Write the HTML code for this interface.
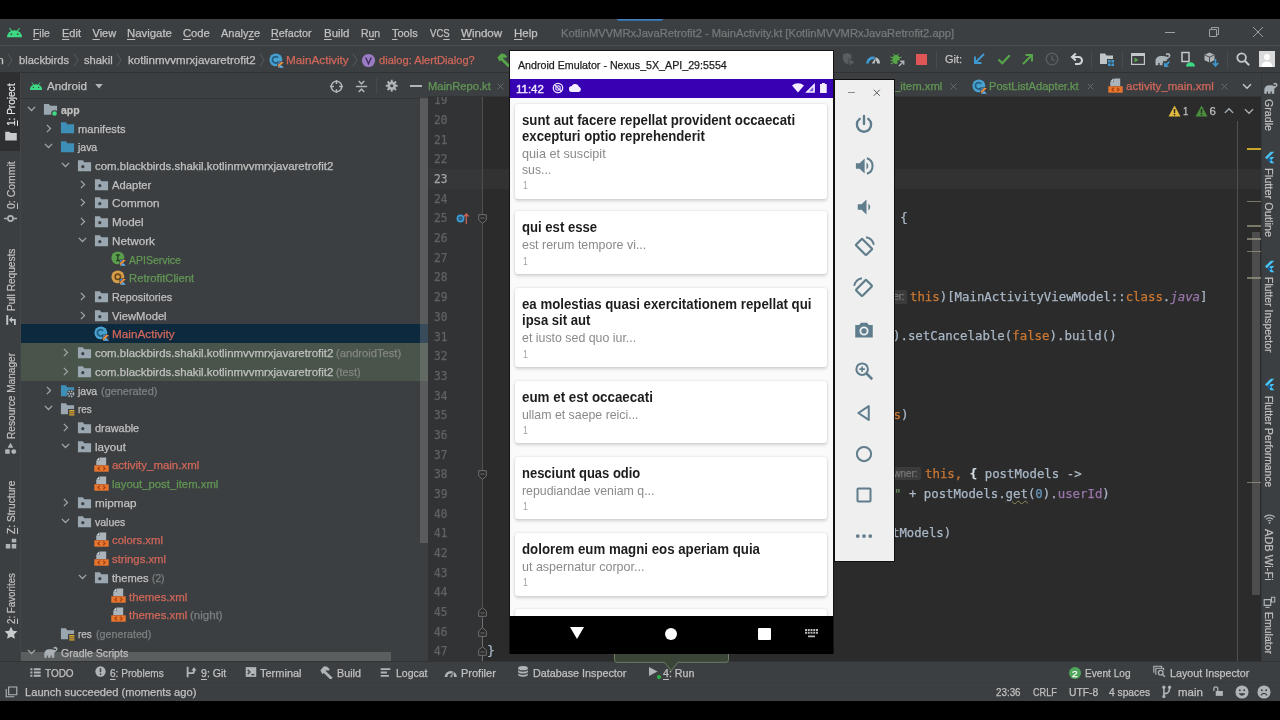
<!DOCTYPE html><html lang="en"><head><meta charset="utf-8"><title>KotlinMVVMRxJavaRetrofit2 - MainActivity.kt</title><style>

html,body{margin:0;padding:0;background:#000;}
body{width:1280px;height:720px;overflow:hidden;position:relative;font-family:'Liberation Sans',sans-serif;will-change:transform;}
.b,.t,.i,.p{position:absolute;}
.t{white-space:pre;transform-origin:0 50%;display:block;-webkit-text-stroke:.25px;}
.p{overflow:hidden;}
u{text-decoration-thickness:1px;text-underline-offset:1.5px;}
.v{position:absolute;white-space:pre;font-size:11px;line-height:14px;color:#c0c0c0;transform-origin:0 0;-webkit-text-stroke:.2px;}
.code{font-family:'DejaVu Sans Mono','Liberation Mono',monospace;}

</style></head><body>
<div class="b" style="left:0px;top:18.5px;width:1280px;height:682.2px;background:#3c3f41;"></div>
<div class="p menubar" style="left:0px;top:18px;width:1280px;height:28px"><div class="b" style="left:0px;top:0.5px;width:1280px;height:27.5px;border-bottom:1px solid #4b4e50;box-sizing:border-box;"></div>
<svg class="i" style="left:5.5px;top:6px;" width="17" height="17" viewBox="0 0 16 16"><path d="M1 12.5a7 6.6 0 0 1 14 0z" fill="#3ddc84"/><path d="M3.6 4.2l1.7 2.6M12.4 4.2l-1.7 2.6" stroke="#3ddc84" stroke-width="1" stroke-linecap="round"/><circle cx="5" cy="9.6" r=".8" fill="#3c3f41"/><circle cx="11" cy="9.6" r=".8" fill="#3c3f41"/></svg>
<span class="t" style="left:33px;top:6.89px;font-size:11px;line-height:16px;color:#c0c0c0;transform:scaleX(0.9444);"><u>F</u>ile</span>
<span class="t" style="left:62px;top:6.89px;font-size:11px;line-height:16px;color:#c0c0c0;transform:scaleX(1);"><u>E</u>dit</span>
<span class="t" style="left:92.5px;top:6.89px;font-size:11px;line-height:16px;color:#c0c0c0;transform:scaleX(1);"><u>V</u>iew</span>
<span class="t" style="left:127px;top:6.89px;font-size:11px;line-height:16px;color:#c0c0c0;transform:scaleX(1.0349);"><u>N</u>avigate</span>
<span class="t" style="left:182.5px;top:6.89px;font-size:11px;line-height:16px;color:#c0c0c0;transform:scaleX(1.0192);"><u>C</u>ode</span>
<span class="t" style="left:221px;top:6.89px;font-size:11px;line-height:16px;color:#c0c0c0;transform:scaleX(1);">Analy<u>z</u>e</span>
<span class="t" style="left:271px;top:6.89px;font-size:11px;line-height:16px;color:#c0c0c0;transform:scaleX(0.9762);"><u>R</u>efactor</span>
<span class="t" style="left:324px;top:6.89px;font-size:11px;line-height:16px;color:#c0c0c0;transform:scaleX(1.0417);"><u>B</u>uild</span>
<span class="t" style="left:361px;top:6.89px;font-size:11px;line-height:16px;color:#c0c0c0;transform:scaleX(0.95);">R<u>u</u>n</span>
<span class="t" style="left:392px;top:6.89px;font-size:11px;line-height:16px;color:#c0c0c0;transform:scaleX(1);"><u>T</u>ools</span>
<span class="t" style="left:430px;top:6.89px;font-size:11px;line-height:16px;color:#c0c0c0;transform:scaleX(0.8696);">VC<u>S</u></span>
<span class="t" style="left:461px;top:6.89px;font-size:11px;line-height:16px;color:#c0c0c0;transform:scaleX(1.0513);"><u>W</u>indow</span>
<span class="t" style="left:514px;top:6.89px;font-size:11px;line-height:16px;color:#c0c0c0;transform:scaleX(1.0435);"><u>H</u>elp</span>
<span class="t" style="left:561px;top:6.89px;font-size:11px;line-height:16px;color:#76797b;transform:scaleX(1.0149);">KotlinMVVMRxJavaRetrofit2 - MainActivity.kt [KotlinMVVMRxJavaRetrofit2.app]</span>
<div class="b" style="left:617px;top:0.5px;width:46px;height:2.6px;background:linear-gradient(#4a8fd0,#2f5f8c);border-radius:0 0 2px 2px;"></div>
<svg class="i" style="left:1162px;top:6.2px;" width="16" height="16" viewBox="0 0 16 16"><path d="M3 8.5h10" stroke="#9da0a2" stroke-width="1"/></svg>
<svg class="i" style="left:1206px;top:6.2px;" width="16" height="16" viewBox="0 0 16 16"><path d="M3.5 5.5h7v7h-7z M5.5 5.5v-2h7v7h-2" fill="none" stroke="#9da0a2" stroke-width="1"/></svg>
<svg class="i" style="left:1250px;top:6.2px;" width="16" height="16" viewBox="0 0 16 16"><path d="M3 3l10 10M13 3L3 13" stroke="#9da0a2" stroke-width="1"/></svg>
</div>
<div class="p navbar" style="left:0px;top:46px;width:1280px;height:27px"><div class="b" style="left:0px;top:0px;width:1280px;height:26.5px;border-bottom:1px solid #2f3133;box-sizing:border-box;"></div>
<span class="t" style="left:-3.5px;top:5.79px;font-size:11px;line-height:16px;color:#c0c0c0;transform:scaleX(1.1167);">n</span>
<svg class="i" style="left:2.5px;top:4px;" width="14" height="20" viewBox="0 0 16 16"><path d="M5.5 1l5 7-5 7" fill="none" stroke="#5c5f61" stroke-width="1"/></svg>
<svg class="i" style="left:69px;top:4px;" width="14" height="20" viewBox="0 0 16 16"><path d="M5.5 1l5 7-5 7" fill="none" stroke="#5c5f61" stroke-width="1"/></svg>
<svg class="i" style="left:111.5px;top:4px;" width="14" height="20" viewBox="0 0 16 16"><path d="M5.5 1l5 7-5 7" fill="none" stroke="#5c5f61" stroke-width="1"/></svg>
<svg class="i" style="left:255px;top:4px;" width="14" height="20" viewBox="0 0 16 16"><path d="M5.5 1l5 7-5 7" fill="none" stroke="#5c5f61" stroke-width="1"/></svg>
<svg class="i" style="left:348px;top:4px;" width="14" height="20" viewBox="0 0 16 16"><path d="M5.5 1l5 7-5 7" fill="none" stroke="#5c5f61" stroke-width="1"/></svg>
<span class="t" style="left:19px;top:5.79px;font-size:11px;line-height:16px;color:#c0c0c0;transform:scaleX(1.01);">blackbirds</span>
<span class="t" style="left:84px;top:5.79px;font-size:11px;line-height:16px;color:#c0c0c0;transform:scaleX(1.0179);">shakil</span>
<span class="t" style="left:127.5px;top:5.79px;font-size:11px;line-height:16px;color:#c0c0c0;transform:scaleX(1.0492);">kotlinmvvmrxjavaretrofit2</span>
<svg class="i" style="left:268.5px;top:6.5px;" width="15" height="15" viewBox="0 0 16 16"><circle cx="7.3" cy="7.3" r="6.9" fill="#47a2cf"/><path d="M9.8 5a3.5 3.5 0 1 0 0 4.6" fill="none" stroke="#245d80" stroke-width="1.8"/><path d="M9 9h7v7H9z" fill="#3c3f41"/><path d="M9.7 9.7h2.8L9.7 12.5z" fill="#3d86d6"/><path d="M12.9 9.7h2.9L9.7 15.8V12.9z" fill="#f5923a"/><path d="M9.9 15.8l3-3 3 3z" fill="#5fb0ea"/></svg>
<span class="t" style="left:286px;top:5.79px;font-size:11px;line-height:16px;color:#d1675a;transform:scaleX(1.0678);">MainActivity</span>
<svg class="i" style="left:360.5px;top:6.5px;" width="15" height="15" viewBox="0 0 16 16"><circle cx="8" cy="8" r="7" fill="#9b7bc4"/><path d="M5 4.8l3 6.6 3-6.6" fill="none" stroke="#3c2a57" stroke-width="1.4"/></svg>
<span class="t" style="left:379px;top:5.79px;font-size:11px;line-height:16px;color:#d1675a;transform:scaleX(1.0105);">dialog: AlertDialog?</span>
<svg class="i" style="left:495.5px;top:5.8px;" width="15" height="15" viewBox="0 0 16 16"><path d="M1.5 5.8l4-4.3 3.6.5 2.8 2.8-1.9 1.9-1.6-1.1-1 1 7.6 7.6-2.1 2.1-7.6-7.6L3.8 10.1z" fill="#57a64a"/></svg>
<svg class="i" style="left:840.5px;top:5.8px;" width="15" height="15" viewBox="0 0 16 16"><path d="M2 2.5l4.5-1.5 4.5 1.5v4c0 3-2 5.5-4.5 6.5C4 12 2 9.5 2 6.5z" fill="#5a5d5f"/><path d="M8.5 7l6.5 4-6.5 4z" fill="#5a5d5f" stroke="#3c3f41" stroke-width=".8"/></svg>
<svg class="i" style="left:864.5px;top:5px;" width="16" height="16" viewBox="0 0 16 16"><path d="M1 12.5a7 7 0 0 1 9-6.7l-1 2.6a4.2 4.2 0 0 0-5.2 4.1z" fill="#3e9ad0"/><path d="M11.3 6.3A7 7 0 0 1 15 12.5h-2.8a4.2 4.2 0 0 0-1.6-3.3z" fill="#c0c5c8"/><path d="M6.8 12.5l4.4-6.8-1.6 6.8z" fill="#c0c5c8"/></svg>
<svg class="i" style="left:889px;top:5.3px;" width="16" height="16" viewBox="0 0 16 16"><ellipse cx="7" cy="8.5" rx="3.6" ry="4.6" fill="#57a64a"/><path d="M4.5 3l1.5 2M9.5 3L8 5M1.5 6l2.5 1M1.5 9.5h2.2M1.8 13l2.4-1.4M12.5 6L10 7" stroke="#57a64a" stroke-width="1.2"/><path d="M8.5 9.5h6.5v6.5H8.5z" fill="#3c3f41"/><path d="M10 15l4.5-4.5M11.2 10.3h3.5v3.5" fill="none" stroke="#aeb4b8" stroke-width="1.4"/></svg>
<div class="b" style="left:916px;top:8.1px;width:10.5px;height:10.5px;background:#e05555;"></div>
<div class="b" style="left:936px;top:4.5px;width:1px;height:18px;background:#494c4e;"></div>
<div class="b" style="left:1091px;top:4.5px;width:1px;height:18px;background:#494c4e;"></div>
<div class="b" style="left:1122px;top:4.5px;width:1px;height:18px;background:#494c4e;"></div>
<div class="b" style="left:1227px;top:4.5px;width:1px;height:18px;background:#494c4e;"></div>
<span class="t" style="left:945px;top:5.39px;font-size:11px;line-height:16px;color:#c0c0c0;transform:scaleX(1);">Git:</span>
<svg class="i" style="left:971px;top:5.3px;" width="16" height="16" viewBox="0 0 16 16"><path d="M13 3L4.5 11.5M4 5.5v6.5h6.5" fill="none" stroke="#3e9ad0" stroke-width="1.9"/></svg>
<svg class="i" style="left:996px;top:5.3px;" width="16" height="16" viewBox="0 0 16 16"><path d="M2.5 8.5l3.8 3.8 7.4-8" fill="none" stroke="#57a64a" stroke-width="2.1"/></svg>
<svg class="i" style="left:1020px;top:5.3px;" width="16" height="16" viewBox="0 0 16 16"><path d="M3 13l8.5-8.5M5.5 4h6.5v6.5" fill="none" stroke="#57a64a" stroke-width="1.9"/></svg>
<svg class="i" style="left:1044px;top:5.3px;" width="16" height="16" viewBox="0 0 16 16"><circle cx="8" cy="8" r="5.8" fill="none" stroke="#5c6062" stroke-width="1.3"/><path d="M8 4.5v3.8l2.6 1.5" fill="none" stroke="#5c6062" stroke-width="1.3"/></svg>
<svg class="i" style="left:1069px;top:5.3px;" width="16" height="16" viewBox="0 0 16 16"><path d="M4 6h5.5a3.5 3.5 0 0 1 0 7H6" fill="none" stroke="#d0d3d5" stroke-width="2.1"/><path d="M6.8 2.5L3 6l3.8 3.5" fill="none" stroke="#d0d3d5" stroke-width="2.1"/></svg>
<svg class="i" style="left:1099px;top:5.3px;" width="16" height="16" viewBox="0 0 16 16"><path d="M1 2.5h5l1.5 2H14v8.5H1z" fill="#c0c5c8"/><path d="M8 8h7.5v7.5H8z" fill="#3c3f41"/><path d="M9 9h2.6v2.6H9zM12.4 9H15v2.6h-2.6zM9 12.4h2.6V15H9zM12.4 12.4H15V15h-2.6z" fill="#3e9ad0"/></svg>
<svg class="i" style="left:1130px;top:5.3px;" width="16" height="16" viewBox="0 0 16 16"><path d="M1 2h14v12H1z" fill="#c4c7c9"/><path d="M2.2 5h11.6v7.8H2.2z" fill="#3c3f41"/><path d="M4.5 6.5l4 2.4-4 2.4z" fill="#57a64a"/></svg>
<svg class="i" style="left:1153.5px;top:4.8px;" width="17" height="17" viewBox="0 0 16 16"><path d="M14.8 2.6c-.9-.9-2.4-1-3.4-.2-.4.3-.4.9-.1 1.3.3.3.8.3 1.2.1.3-.3.8-.2 1.1.1.4.4.4 1 0 1.4-.9.9-2.5-.7-4.6-.7H6.4C3.6 4.6 1.4 6.7 1.4 9.3V13.5H4v-2.3h1.4v2.3H8v-2.3h1.4v2.3H12V9c0-.5.2-1 .6-1.3l1.9-1.5c1.2-.9 1.3-2.6.3-3.6z" fill="#aab3b8"/><path d="M8.5 9.5h7.5v6.5H8.5z" fill="#3c3f41"/><path d="M14.5 10l-4 4M10.2 11v3.3h3.3" fill="none" stroke="#3e9ad0" stroke-width="1.5"/></svg>
<svg class="i" style="left:1179px;top:5.3px;" width="16" height="16" viewBox="0 0 16 16"><path d="M3 1.5h7v9H3z" fill="none" stroke="#c4c7c9" stroke-width="1.5"/><path d="M7 15.5a4.5 4.2 0 0 1 9 0z" fill="#3ddc84"/></svg>
<svg class="i" style="left:1203px;top:5.3px;" width="16" height="16" viewBox="0 0 16 16"><path d="M6.5 1.5l5 2.3v5.4l-5 2.3-5-2.3V3.8z" fill="#aeb4b8"/><path d="M6.5 6.2v5.3M1.5 3.8l5 2.4 5-2.4" fill="none" stroke="#3c3f41" stroke-width=".9"/><path d="M12.5 8v6.5M9.8 12l2.7 2.8 2.7-2.8" fill="none" stroke="#3e9ad0" stroke-width="1.6"/></svg>
<svg class="i" style="left:1234.5px;top:5.3px;" width="16" height="16" viewBox="0 0 16 16"><circle cx="6.6" cy="6.6" r="4.3" fill="none" stroke="#c4c7c9" stroke-width="1.8"/><path d="M9.8 9.8l4.4 4.4" stroke="#c4c7c9" stroke-width="2.1"/></svg>
<svg class="i" style="left:1259px;top:5.3px;" width="16" height="16" viewBox="0 0 16 16"><rect width="16" height="16" fill="#d8dadb"/><circle cx="8" cy="6" r="2.9" fill="#fff"/><path d="M2.5 16c0-4 2.5-5.5 5.5-5.5s5.5 1.5 5.5 5.5z" fill="#fff"/></svg>
</div>
<div class="p stripe-left" style="left:0px;top:72px;width:21px;height:589px"><div class="b" style="left:0px;top:0.5px;width:20.5px;height:588.5px;background:#3c3f41;border-right:1px solid #424547;box-sizing:border-box;"></div>
<div class="b" style="left:0px;top:0.5px;width:20px;height:78.5px;background:#2d2f30;"></div>
<span class="v" style="left:4px;top:53.5px;color:#e4e4e4;transform:rotate(-90deg) scaleX(0.913);"><u>1</u>: Project</span>
<svg class="i" style="left:4.5px;top:57.6px;" width="12" height="12" viewBox="0 0 16 16"><path d="M.3 2.2h5.6l1.7 1.9h8.1v9.8H.3z" fill="#c8cbcc"/></svg>
<span class="v" style="left:4px;top:137px;color:#c0c0c0;transform:rotate(-90deg) scaleX(0.95);"><u>0</u>: Commit</span>
<svg class="i" style="left:4px;top:140.2px;transform:rotate(90deg);" width="13" height="13" viewBox="0 0 16 16"><circle cx="8" cy="8" r="3.2" fill="none" stroke="#aeb4b8" stroke-width="2"/><path d="M8 0v4.5M8 11.5V16" stroke="#aeb4b8" stroke-width="2"/></svg>
<span class="v" style="left:4px;top:238.5px;color:#c0c0c0;transform:rotate(-90deg) scaleX(0.9191);">Pull Requests</span>
<svg class="i" style="left:5px;top:242.3px;" width="12" height="12" viewBox="0 0 16 16"><path d="M3 1.5v13" stroke="#c0c4c6" stroke-width="2.6"/><path d="M13.2 14.5V7.8H7.5" fill="none" stroke="#c0c4c6" stroke-width="2.4"/><path d="M9.5 3.6L5.3 7.8l4.2 4.2z" fill="#c0c4c6"/></svg>
<span class="v" style="left:4px;top:366.5px;color:#c0c0c0;transform:rotate(-90deg) scaleX(0.9202);">Resource Manager</span>
<svg class="i" style="left:4px;top:370.2px;" width="13" height="13" viewBox="0 0 16 16"><path d="M8 1l3.5 6h-7z" fill="#aeb4b8"/><rect x="1.5" y="9" width="5.5" height="5.5" fill="#aeb4b8"/><circle cx="12" cy="11.8" r="3" fill="#aeb4b8"/></svg>
<span class="v" style="left:4px;top:462px;color:#c0c0c0;transform:rotate(-90deg) scaleX(0.9298);"><u>Z</u>: Structure</span>
<svg class="i" style="left:4.5px;top:466.4px;" width="12" height="12" viewBox="0 0 16 16"><rect x="1" y="8" width="6" height="6" fill="#aeb4b8"/><rect x="9" y="8" width="6" height="6" fill="#aeb4b8"/><rect x="9" y="1" width="6" height="5" fill="#aeb4b8"/></svg>
<span class="v" style="left:4px;top:551.5px;color:#c0c0c0;transform:rotate(-90deg) scaleX(0.886);"><u>2</u>: Favorites</span>
<svg class="i" style="left:3.5px;top:554.3px;" width="14" height="14" viewBox="0 0 16 16"><path d="M8 .8l2.2 4.7 5.1.6-3.8 3.5 1 5.1L8 12.2l-4.5 2.5 1-5.1L.7 6.1l5.1-.6z" fill="#c8cbcc"/></svg>
</div>
<div class="p project" style="left:20px;top:72px;width:408px;height:589px"><div class="b" style="left:0.5px;top:0.5px;width:407px;height:588.5px;background:#3c3f41;box-sizing:border-box;"></div>
<div class="b" style="left:0.5px;top:0.5px;width:407px;height:26.5px;border-bottom:1px solid #323436;box-sizing:border-box;"></div>
<svg class="i" style="left:8.5px;top:7px;" width="14" height="14" viewBox="0 0 16 16"><path d="M1 12.5a7 6.6 0 0 1 14 0z" fill="#3ddc84"/><path d="M3.6 4.2l1.7 2.6M12.4 4.2l-1.7 2.6" stroke="#3ddc84" stroke-width="1" stroke-linecap="round"/><circle cx="5" cy="9.6" r=".8" fill="#3c3f41"/><circle cx="11" cy="9.6" r=".8" fill="#3c3f41"/></svg>
<span class="t" style="left:27px;top:6.39px;font-size:11px;line-height:16px;color:#c0c0c0;transform:scaleX(1.0526);">Android</span>
<svg class="i" style="left:75.2px;top:12.4px;" width="8" height="5" viewBox="0 0 9 6"><path d="M0 0h9L4.5 5.5z" fill="#aeb4b8"/></svg>
<svg class="i" style="left:308.5px;top:6.5px;" width="15" height="15" viewBox="0 0 16 16"><circle cx="8" cy="8" r="5.6" fill="none" stroke="#aeb4b8" stroke-width="1.6"/><path d="M8 1v4.2M8 10.8V15M1 8h4.2M10.8 8H15" stroke="#aeb4b8" stroke-width="1.6"/></svg>
<svg class="i" style="left:333.5px;top:6.5px;" width="15" height="15" viewBox="0 0 16 16"><path d="M2 8h12" stroke="#aeb4b8" stroke-width="1.6"/><path d="M5 2.2l3 3 3-3M5 13.8l3-3 3 3" fill="none" stroke="#aeb4b8" stroke-width="1.6"/></svg>
<div class="b" style="left:356px;top:6px;width:1px;height:16px;background:#47494b;"></div>
<svg class="i" style="left:364.75px;top:7.25px;" width="13.5" height="13.5" viewBox="0 0 16 16"><circle cx="8" cy="8" r="3.7" fill="none" stroke="#aeb4b8" stroke-width="2.8"/><path d="M8 1v14M1 8h14M3 3l10 10M13 3L3 13" stroke="#aeb4b8" stroke-width="2.2"/><circle cx="8" cy="8" r="1.9" fill="#3c3f41"/></svg>
<div class="b" style="left:390px;top:13.2px;width:12px;height:1.8px;background:#aeb4b8;"></div>
<div class="b" style="left:0.5px;top:252.44px;width:407px;height:18.72px;background:#0d293e;"></div>
<div class="b" style="left:0.5px;top:271.16px;width:407px;height:37.44px;background:#49544a;"></div>
<svg class="i" style="left:5px;top:29.7px;" width="13" height="13" viewBox="0 0 16 16"><path d="M3.5 6l4.5 4.5L12.5 6" fill="none" stroke="#a3a7a9" stroke-width="1.5"/></svg>
<svg class="i" style="left:23px;top:29.7px;" width="15" height="15" viewBox="0 0 16 16"><path d="M1 2h5.2l1.6 2H15v9.5H1z" fill="#9aa7b0"/><circle cx="12.3" cy="12.3" r="3.6" fill="#3c3f41"/><circle cx="12.3" cy="12.3" r="2.4" fill="#3ddc84"/></svg>
<span class="t" style="left:41px;top:29.79px;font-size:11px;line-height:16px;color:#c0c0c0;font-weight:bold;transform:scaleX(0.95);">app</span>
<svg class="i" style="left:21.87px;top:49.52px;" width="13" height="13" viewBox="0 0 16 16"><path d="M6 3.5l4.5 4.5L6 12.5" fill="none" stroke="#a3a7a9" stroke-width="1.5"/></svg>
<svg class="i" style="left:40px;top:48.42px;" width="15" height="15" viewBox="0 0 16 16"><path d="M1 2.5h5.2l1.6 2H15v9.5H1z" fill="#3e8fb8"/></svg>
<span class="t" style="left:58px;top:48.51px;font-size:11px;line-height:16px;color:#c0c0c0;transform:scaleX(1.0106);">manifests</span>
<svg class="i" style="left:21.87px;top:67.14px;" width="13" height="13" viewBox="0 0 16 16"><path d="M3.5 6l4.5 4.5L12.5 6" fill="none" stroke="#a3a7a9" stroke-width="1.5"/></svg>
<svg class="i" style="left:40px;top:67.14px;" width="15" height="15" viewBox="0 0 16 16"><path d="M1 2.5h5.2l1.6 2H15v9.5H1z" fill="#3e8fb8"/></svg>
<span class="t" style="left:58px;top:67.23px;font-size:11px;line-height:16px;color:#c0c0c0;transform:scaleX(0.95);">java</span>
<svg class="i" style="left:38.74px;top:85.86px;" width="13" height="13" viewBox="0 0 16 16"><path d="M3.5 6l4.5 4.5L12.5 6" fill="none" stroke="#a3a7a9" stroke-width="1.5"/></svg>
<svg class="i" style="left:57px;top:85.86px;" width="15" height="15" viewBox="0 0 16 16"><path d="M1 2.5h5.2l1.6 2H15v9.5H1z" fill="#9aa7b0"/><circle cx="6.2" cy="9.2" r="1.7" fill="#3c3f41"/></svg>
<span class="t" style="left:75px;top:85.95px;font-size:11px;line-height:16px;color:#c0c0c0;transform:scaleX(1.0393);">com.blackbirds.shakil.kotlinmvvmrxjavaretrofit2</span>
<svg class="i" style="left:55.61px;top:105.68px;" width="13" height="13" viewBox="0 0 16 16"><path d="M6 3.5l4.5 4.5L6 12.5" fill="none" stroke="#a3a7a9" stroke-width="1.5"/></svg>
<svg class="i" style="left:73.5px;top:104.58px;" width="15" height="15" viewBox="0 0 16 16"><path d="M1 2.5h5.2l1.6 2H15v9.5H1z" fill="#9aa7b0"/><circle cx="6.2" cy="9.2" r="1.7" fill="#3c3f41"/></svg>
<span class="t" style="left:91.5px;top:104.67px;font-size:11px;line-height:16px;color:#c0c0c0;transform:scaleX(1.0179);">Adapter</span>
<svg class="i" style="left:55.61px;top:124.4px;" width="13" height="13" viewBox="0 0 16 16"><path d="M6 3.5l4.5 4.5L6 12.5" fill="none" stroke="#a3a7a9" stroke-width="1.5"/></svg>
<svg class="i" style="left:73.5px;top:123.3px;" width="15" height="15" viewBox="0 0 16 16"><path d="M1 2.5h5.2l1.6 2H15v9.5H1z" fill="#9aa7b0"/><circle cx="6.2" cy="9.2" r="1.7" fill="#3c3f41"/></svg>
<span class="t" style="left:91.5px;top:123.39px;font-size:11px;line-height:16px;color:#c0c0c0;transform:scaleX(1.0667);">Common</span>
<svg class="i" style="left:55.61px;top:143.12px;" width="13" height="13" viewBox="0 0 16 16"><path d="M6 3.5l4.5 4.5L6 12.5" fill="none" stroke="#a3a7a9" stroke-width="1.5"/></svg>
<svg class="i" style="left:73.5px;top:142.02px;" width="15" height="15" viewBox="0 0 16 16"><path d="M1 2.5h5.2l1.6 2H15v9.5H1z" fill="#9aa7b0"/><circle cx="6.2" cy="9.2" r="1.7" fill="#3c3f41"/></svg>
<span class="t" style="left:91.5px;top:142.11px;font-size:11px;line-height:16px;color:#c0c0c0;transform:scaleX(1.0567);">Model</span>
<svg class="i" style="left:55.61px;top:160.74px;" width="13" height="13" viewBox="0 0 16 16"><path d="M3.5 6l4.5 4.5L12.5 6" fill="none" stroke="#a3a7a9" stroke-width="1.5"/></svg>
<svg class="i" style="left:73.5px;top:160.74px;" width="15" height="15" viewBox="0 0 16 16"><path d="M1 2.5h5.2l1.6 2H15v9.5H1z" fill="#9aa7b0"/><circle cx="6.2" cy="9.2" r="1.7" fill="#3c3f41"/></svg>
<span class="t" style="left:91.5px;top:160.83px;font-size:11px;line-height:16px;color:#c0c0c0;transform:scaleX(1.0625);">Network</span>
<svg class="i" style="left:90.5px;top:179.46px;" width="15" height="15" viewBox="0 0 16 16"><circle cx="7.3" cy="7.3" r="6.9" fill="#5a9e4d"/><path d="M5.3 4.3h4M7.3 4.3v6M5.3 10.3h4" stroke="#26401f" stroke-width="1.5" fill="none"/><path d="M9 9h7v7H9z" fill="#3c3f41"/><path d="M9.7 9.7h2.8L9.7 12.5z" fill="#3d86d6"/><path d="M12.9 9.7h2.9L9.7 15.8V12.9z" fill="#f5923a"/><path d="M9.9 15.8l3-3 3 3z" fill="#5fb0ea"/></svg>
<span class="t" style="left:108.5px;top:179.55px;font-size:11px;line-height:16px;color:#629755;transform:scaleX(0.9537);">APIService</span>
<svg class="i" style="left:90.5px;top:198.18px;" width="15" height="15" viewBox="0 0 16 16"><circle cx="7.3" cy="7.3" r="6.9" fill="#d59d4a"/><circle cx="7.3" cy="7.3" r="2.9" fill="none" stroke="#6b4716" stroke-width="1.7"/><path d="M9 9h7v7H9z" fill="#3c3f41"/><path d="M9.7 9.7h2.8L9.7 12.5z" fill="#3d86d6"/><path d="M12.9 9.7h2.9L9.7 15.8V12.9z" fill="#f5923a"/><path d="M9.9 15.8l3-3 3 3z" fill="#5fb0ea"/></svg>
<span class="t" style="left:108.5px;top:198.27px;font-size:11px;line-height:16px;color:#629755;transform:scaleX(1.0234);">RetrofitClient</span>
<svg class="i" style="left:55.61px;top:218px;" width="13" height="13" viewBox="0 0 16 16"><path d="M6 3.5l4.5 4.5L6 12.5" fill="none" stroke="#a3a7a9" stroke-width="1.5"/></svg>
<svg class="i" style="left:73.5px;top:216.9px;" width="15" height="15" viewBox="0 0 16 16"><path d="M1 2.5h5.2l1.6 2H15v9.5H1z" fill="#9aa7b0"/><circle cx="6.2" cy="9.2" r="1.7" fill="#3c3f41"/></svg>
<span class="t" style="left:91.5px;top:216.99px;font-size:11px;line-height:16px;color:#c0c0c0;transform:scaleX(0.9836);">Repositories</span>
<svg class="i" style="left:55.61px;top:236.72px;" width="13" height="13" viewBox="0 0 16 16"><path d="M6 3.5l4.5 4.5L6 12.5" fill="none" stroke="#a3a7a9" stroke-width="1.5"/></svg>
<svg class="i" style="left:73.5px;top:235.62px;" width="15" height="15" viewBox="0 0 16 16"><path d="M1 2.5h5.2l1.6 2H15v9.5H1z" fill="#9aa7b0"/><circle cx="6.2" cy="9.2" r="1.7" fill="#3c3f41"/></svg>
<span class="t" style="left:91.5px;top:235.71px;font-size:11px;line-height:16px;color:#c0c0c0;transform:scaleX(1.0185);">ViewModel</span>
<svg class="i" style="left:73.5px;top:254.34px;" width="15" height="15" viewBox="0 0 16 16"><circle cx="7.3" cy="7.3" r="6.9" fill="#47a2cf"/><path d="M9.8 5a3.5 3.5 0 1 0 0 4.6" fill="none" stroke="#245d80" stroke-width="1.8"/><path d="M9 9h7v7H9z" fill="#3c3f41"/><path d="M9.7 9.7h2.8L9.7 12.5z" fill="#3d86d6"/><path d="M12.9 9.7h2.9L9.7 15.8V12.9z" fill="#f5923a"/><path d="M9.9 15.8l3-3 3 3z" fill="#5fb0ea"/></svg>
<span class="t" style="left:91.5px;top:254.43px;font-size:11px;line-height:16px;color:#d1675a;transform:scaleX(1.0678);">MainActivity</span>
<svg class="i" style="left:38.74px;top:274.16px;" width="13" height="13" viewBox="0 0 16 16"><path d="M6 3.5l4.5 4.5L6 12.5" fill="none" stroke="#a3a7a9" stroke-width="1.5"/></svg>
<svg class="i" style="left:57px;top:273.06px;" width="15" height="15" viewBox="0 0 16 16"><path d="M1 2.5h5.2l1.6 2H15v9.5H1z" fill="#9aa7b0"/><circle cx="6.2" cy="9.2" r="1.7" fill="#3c3f41"/></svg>
<span class="t" style="left:75px;top:273.15px;font-size:11px;line-height:16px;color:#c0c0c0;transform:scaleX(1.0393);">com.blackbirds.shakil.kotlinmvvmrxjavaretrofit2</span>
<span class="t" style="left:315.5px;top:273.15px;font-size:11px;line-height:16px;color:#838683;transform:scaleX(1.0156);">(androidTest)</span>
<svg class="i" style="left:38.74px;top:292.88px;" width="13" height="13" viewBox="0 0 16 16"><path d="M6 3.5l4.5 4.5L6 12.5" fill="none" stroke="#a3a7a9" stroke-width="1.5"/></svg>
<svg class="i" style="left:57px;top:291.78px;" width="15" height="15" viewBox="0 0 16 16"><path d="M1 2.5h5.2l1.6 2H15v9.5H1z" fill="#9aa7b0"/><circle cx="6.2" cy="9.2" r="1.7" fill="#3c3f41"/></svg>
<span class="t" style="left:75px;top:291.87px;font-size:11px;line-height:16px;color:#c0c0c0;transform:scaleX(1.0393);">com.blackbirds.shakil.kotlinmvvmrxjavaretrofit2</span>
<span class="t" style="left:315.5px;top:291.87px;font-size:11px;line-height:16px;color:#838683;transform:scaleX(0.98);">(test)</span>
<svg class="i" style="left:21.87px;top:311.6px;" width="13" height="13" viewBox="0 0 16 16"><path d="M6 3.5l4.5 4.5L6 12.5" fill="none" stroke="#a3a7a9" stroke-width="1.5"/></svg>
<svg class="i" style="left:40px;top:310.5px;" width="15" height="15" viewBox="0 0 16 16"><path d="M1 2.5h5.2l1.6 2H15v9.5H1z" fill="#3e8fb8"/><circle cx="11.5" cy="11.5" r="4.2" fill="#3c3f41"/><circle cx="11.5" cy="11.5" r="2.9" fill="none" stroke="#aab3b8" stroke-width="1.8" stroke-dasharray="1.6 1.1"/><circle cx="11.5" cy="11.5" r="1" fill="#aab3b8"/></svg>
<span class="t" style="left:58px;top:310.59px;font-size:11px;line-height:16px;color:#c0c0c0;transform:scaleX(0.95);">java</span>
<span class="t" style="left:80.5px;top:310.59px;font-size:11px;line-height:16px;color:#7d8082;transform:scaleX(0.9912);">(generated)</span>
<svg class="i" style="left:21.87px;top:329.22px;" width="13" height="13" viewBox="0 0 16 16"><path d="M3.5 6l4.5 4.5L12.5 6" fill="none" stroke="#a3a7a9" stroke-width="1.5"/></svg>
<svg class="i" style="left:40px;top:329.22px;" width="15" height="15" viewBox="0 0 16 16"><path d="M1 2.5h5.2l1.6 2H15v9.5H1z" fill="#9aa7b0"/><rect x="8.5" y="8.5" width="8" height="8" fill="#3c3f41"/><path d="M9.8 10.4h5.6M9.8 12.6h5.6M9.8 14.8h5.6" stroke="#e0a92f" stroke-width="1.4"/></svg>
<span class="t" style="left:58px;top:329.31px;font-size:11px;line-height:16px;color:#c0c0c0;transform:scaleX(0.9);">res</span>
<svg class="i" style="left:38.74px;top:349.04px;" width="13" height="13" viewBox="0 0 16 16"><path d="M6 3.5l4.5 4.5L6 12.5" fill="none" stroke="#a3a7a9" stroke-width="1.5"/></svg>
<svg class="i" style="left:57px;top:347.94px;" width="15" height="15" viewBox="0 0 16 16"><path d="M1 2.5h5.2l1.6 2H15v9.5H1z" fill="#9aa7b0"/><circle cx="6.2" cy="9.2" r="1.7" fill="#3c3f41"/></svg>
<span class="t" style="left:75px;top:348.03px;font-size:11px;line-height:16px;color:#c0c0c0;transform:scaleX(0.9889);">drawable</span>
<svg class="i" style="left:38.74px;top:366.66px;" width="13" height="13" viewBox="0 0 16 16"><path d="M3.5 6l4.5 4.5L12.5 6" fill="none" stroke="#a3a7a9" stroke-width="1.5"/></svg>
<svg class="i" style="left:57px;top:366.66px;" width="15" height="15" viewBox="0 0 16 16"><path d="M1 2.5h5.2l1.6 2H15v9.5H1z" fill="#9aa7b0"/><circle cx="6.2" cy="9.2" r="1.7" fill="#3c3f41"/></svg>
<span class="t" style="left:75px;top:366.75px;font-size:11px;line-height:16px;color:#c0c0c0;transform:scaleX(1.0517);">layout</span>
<svg class="i" style="left:73.5px;top:385.38px;" width="15" height="15" viewBox="0 0 16 16"><path d="M6 .5h7v7.9H2.4V4.2z" fill="#aab4ba"/><path d="M5.4 .5v3.1H2.4z" fill="#d5dadd"/><path d="M5.4 .5v3.1H2.4v.6h3.7V.5z" fill="#3c3f41" opacity=".55"/><rect x=".3" y="8.8" width="15.4" height="6.9" fill="#e6752f"/><path d="M6.2 10.4l-2 1.85 2 1.85M9.8 10.4l2 1.85-2 1.85" fill="none" stroke="#a8410f" stroke-width="1.3"/></svg>
<span class="t" style="left:91.5px;top:385.47px;font-size:11px;line-height:16px;color:#d1675a;transform:scaleX(1.0417);">activity_main.xml</span>
<svg class="i" style="left:73.5px;top:404.1px;" width="15" height="15" viewBox="0 0 16 16"><path d="M6 .5h7v7.9H2.4V4.2z" fill="#aab4ba"/><path d="M5.4 .5v3.1H2.4z" fill="#d5dadd"/><path d="M5.4 .5v3.1H2.4v.6h3.7V.5z" fill="#3c3f41" opacity=".55"/><rect x=".3" y="8.8" width="15.4" height="6.9" fill="#e6752f"/><path d="M6.2 10.4l-2 1.85 2 1.85M9.8 10.4l2 1.85-2 1.85" fill="none" stroke="#a8410f" stroke-width="1.3"/></svg>
<span class="t" style="left:91.5px;top:404.19px;font-size:11px;line-height:16px;color:#629755;transform:scaleX(1.0291);">layout_post_item.xml</span>
<svg class="i" style="left:38.74px;top:423.92px;" width="13" height="13" viewBox="0 0 16 16"><path d="M6 3.5l4.5 4.5L6 12.5" fill="none" stroke="#a3a7a9" stroke-width="1.5"/></svg>
<svg class="i" style="left:57px;top:422.82px;" width="15" height="15" viewBox="0 0 16 16"><path d="M1 2.5h5.2l1.6 2H15v9.5H1z" fill="#9aa7b0"/><circle cx="6.2" cy="9.2" r="1.7" fill="#3c3f41"/></svg>
<span class="t" style="left:75px;top:422.91px;font-size:11px;line-height:16px;color:#c0c0c0;transform:scaleX(1.0641);">mipmap</span>
<svg class="i" style="left:38.74px;top:441.54px;" width="13" height="13" viewBox="0 0 16 16"><path d="M3.5 6l4.5 4.5L12.5 6" fill="none" stroke="#a3a7a9" stroke-width="1.5"/></svg>
<svg class="i" style="left:57px;top:441.54px;" width="15" height="15" viewBox="0 0 16 16"><path d="M1 2.5h5.2l1.6 2H15v9.5H1z" fill="#9aa7b0"/><circle cx="6.2" cy="9.2" r="1.7" fill="#3c3f41"/></svg>
<span class="t" style="left:75px;top:441.63px;font-size:11px;line-height:16px;color:#c0c0c0;transform:scaleX(0.9531);">values</span>
<svg class="i" style="left:73.5px;top:460.26px;" width="15" height="15" viewBox="0 0 16 16"><path d="M6 .5h7v7.9H2.4V4.2z" fill="#aab4ba"/><path d="M5.4 .5v3.1H2.4z" fill="#d5dadd"/><path d="M5.4 .5v3.1H2.4v.6h3.7V.5z" fill="#3c3f41" opacity=".55"/><rect x=".3" y="8.8" width="15.4" height="6.9" fill="#e6752f"/><path d="M6.2 10.4l-2 1.85 2 1.85M9.8 10.4l2 1.85-2 1.85" fill="none" stroke="#a8410f" stroke-width="1.3"/></svg>
<span class="t" style="left:91.5px;top:460.35px;font-size:11px;line-height:16px;color:#d1675a;transform:scaleX(1.03);">colors.xml</span>
<svg class="i" style="left:73.5px;top:478.98px;" width="15" height="15" viewBox="0 0 16 16"><path d="M6 .5h7v7.9H2.4V4.2z" fill="#aab4ba"/><path d="M5.4 .5v3.1H2.4z" fill="#d5dadd"/><path d="M5.4 .5v3.1H2.4v.6h3.7V.5z" fill="#3c3f41" opacity=".55"/><rect x=".3" y="8.8" width="15.4" height="6.9" fill="#e6752f"/><path d="M6.2 10.4l-2 1.85 2 1.85M9.8 10.4l2 1.85-2 1.85" fill="none" stroke="#a8410f" stroke-width="1.3"/></svg>
<span class="t" style="left:91.5px;top:479.07px;font-size:11px;line-height:16px;color:#d1675a;transform:scaleX(1.0283);">strings.xml</span>
<svg class="i" style="left:55.61px;top:497.7px;" width="13" height="13" viewBox="0 0 16 16"><path d="M3.5 6l4.5 4.5L12.5 6" fill="none" stroke="#a3a7a9" stroke-width="1.5"/></svg>
<svg class="i" style="left:73.5px;top:497.7px;" width="15" height="15" viewBox="0 0 16 16"><path d="M1 2.5h5.2l1.6 2H15v9.5H1z" fill="#9aa7b0"/><circle cx="6.2" cy="9.2" r="1.7" fill="#3c3f41"/></svg>
<span class="t" style="left:91.5px;top:497.79px;font-size:11px;line-height:16px;color:#c0c0c0;transform:scaleX(1.0139);">themes</span>
<span class="t" style="left:131.5px;top:497.79px;font-size:11px;line-height:16px;color:#7d8082;transform:scaleX(0.9231);">(2)</span>
<svg class="i" style="left:90.5px;top:516.42px;" width="15" height="15" viewBox="0 0 16 16"><path d="M6 .5h7v7.9H2.4V4.2z" fill="#aab4ba"/><path d="M5.4 .5v3.1H2.4z" fill="#d5dadd"/><path d="M5.4 .5v3.1H2.4v.6h3.7V.5z" fill="#3c3f41" opacity=".55"/><rect x=".3" y="8.8" width="15.4" height="6.9" fill="#e6752f"/><path d="M6.2 10.4l-2 1.85 2 1.85M9.8 10.4l2 1.85-2 1.85" fill="none" stroke="#a8410f" stroke-width="1.3"/></svg>
<span class="t" style="left:108.5px;top:516.51px;font-size:11px;line-height:16px;color:#d1675a;transform:scaleX(1.0357);">themes.xml</span>
<svg class="i" style="left:90.5px;top:535.14px;" width="15" height="15" viewBox="0 0 16 16"><path d="M6 .5h7v7.9H2.4V4.2z" fill="#aab4ba"/><path d="M5.4 .5v3.1H2.4z" fill="#d5dadd"/><path d="M5.4 .5v3.1H2.4v.6h3.7V.5z" fill="#3c3f41" opacity=".55"/><rect x=".3" y="8.8" width="15.4" height="6.9" fill="#e6752f"/><path d="M6.2 10.4l-2 1.85 2 1.85M9.8 10.4l2 1.85-2 1.85" fill="none" stroke="#a8410f" stroke-width="1.3"/></svg>
<span class="t" style="left:108.5px;top:535.23px;font-size:11px;line-height:16px;color:#d1675a;transform:scaleX(1.0357);">themes.xml</span>
<span class="t" style="left:170px;top:535.23px;font-size:11px;line-height:16px;color:#7d8082;transform:scaleX(1.0484);">(night)</span>
<svg class="i" style="left:40px;top:553.86px;" width="15" height="15" viewBox="0 0 16 16"><path d="M1 2.5h5.2l1.6 2H15v9.5H1z" fill="#9aa7b0"/><rect x="8.5" y="8.5" width="8" height="8" fill="#3c3f41"/><path d="M9.8 10.4h5.6M9.8 12.6h5.6M9.8 14.8h5.6" stroke="#e0a92f" stroke-width="1.4"/></svg>
<span class="t" style="left:58px;top:553.95px;font-size:11px;line-height:16px;color:#c0c0c0;transform:scaleX(0.9);">res</span>
<span class="t" style="left:75.5px;top:553.95px;font-size:11px;line-height:16px;color:#7d8082;transform:scaleX(0.9737);">(generated)</span>
<svg class="i" style="left:5px;top:572.58px;" width="13" height="13" viewBox="0 0 16 16"><path d="M3.5 6l4.5 4.5L12.5 6" fill="none" stroke="#a3a7a9" stroke-width="1.5"/></svg>
<svg class="i" style="left:23px;top:572.58px;" width="15" height="15" viewBox="0 0 16 16"><path d="M14.8 2.6c-.9-.9-2.4-1-3.4-.2-.4.3-.4.9-.1 1.3.3.3.8.3 1.2.1.3-.3.8-.2 1.1.1.4.4.4 1 0 1.4-.9.9-2.5-.7-4.6-.7H6.4C3.6 4.6 1.4 6.7 1.4 9.3V13.5H4v-2.3h1.4v2.3H8v-2.3h1.4v2.3H12V9c0-.5.2-1 .6-1.3l1.9-1.5c1.2-.9 1.3-2.6.3-3.6z" fill="#aab3b8"/></svg>
<span class="t" style="left:41px;top:572.67px;font-size:11px;line-height:16px;color:#c0c0c0;transform:scaleX(0.9643);">Gradle Scripts</span>
<div class="b" style="left:400px;top:26px;width:7.5px;height:445px;background:rgba(166,166,166,.28);"></div>
<div class="b" style="left:1px;top:580px;width:370px;height:8.5px;background:rgba(166,166,166,.30);"></div>
</div>
<div class="p editor" style="left:427px;top:72px;width:834px;height:589px"><div class="b" style="left:0.5px;top:0.5px;width:833px;height:588.5px;background:#2b2b2b;box-sizing:border-box;"></div>
<div class="b" style="left:0.5px;top:25px;width:54.5px;height:564px;background:#313335;border-right:1px solid #4d4f51;"></div>
<div class="b" style="left:0.5px;top:97px;width:54.5px;height:19.7px;background:#353739;"></div>
<div class="b" style="left:56px;top:97px;width:777.5px;height:19.7px;background:#323232;"></div>
<span class="t" style="left:7.2px;top:20.36px;font-size:12px;line-height:16px;color:#606366;font-family:'DejaVu Sans Mono','Liberation Mono',monospace;transform:scaleX(0.9286);">19</span>
<span class="t" style="left:7.2px;top:40.04px;font-size:12px;line-height:16px;color:#606366;font-family:'DejaVu Sans Mono','Liberation Mono',monospace;transform:scaleX(0.9286);">20</span>
<span class="t" style="left:7.2px;top:59.72px;font-size:12px;line-height:16px;color:#606366;font-family:'DejaVu Sans Mono','Liberation Mono',monospace;transform:scaleX(0.9286);">21</span>
<span class="t" style="left:7.2px;top:79.4px;font-size:12px;line-height:16px;color:#606366;font-family:'DejaVu Sans Mono','Liberation Mono',monospace;transform:scaleX(0.9286);">22</span>
<span class="t" style="left:7.2px;top:99.08px;font-size:12px;line-height:16px;color:#a4a3a3;font-family:'DejaVu Sans Mono','Liberation Mono',monospace;transform:scaleX(0.9286);">23</span>
<span class="t" style="left:7.2px;top:118.76px;font-size:12px;line-height:16px;color:#606366;font-family:'DejaVu Sans Mono','Liberation Mono',monospace;transform:scaleX(0.9286);">24</span>
<span class="t" style="left:7.2px;top:138.44px;font-size:12px;line-height:16px;color:#606366;font-family:'DejaVu Sans Mono','Liberation Mono',monospace;transform:scaleX(0.9286);">25</span>
<span class="t" style="left:7.2px;top:158.12px;font-size:12px;line-height:16px;color:#606366;font-family:'DejaVu Sans Mono','Liberation Mono',monospace;transform:scaleX(0.9286);">26</span>
<span class="t" style="left:7.2px;top:177.8px;font-size:12px;line-height:16px;color:#606366;font-family:'DejaVu Sans Mono','Liberation Mono',monospace;transform:scaleX(0.9286);">27</span>
<span class="t" style="left:7.2px;top:197.48px;font-size:12px;line-height:16px;color:#606366;font-family:'DejaVu Sans Mono','Liberation Mono',monospace;transform:scaleX(0.9286);">28</span>
<span class="t" style="left:7.2px;top:217.16px;font-size:12px;line-height:16px;color:#606366;font-family:'DejaVu Sans Mono','Liberation Mono',monospace;transform:scaleX(0.9286);">29</span>
<span class="t" style="left:7.2px;top:236.84px;font-size:12px;line-height:16px;color:#606366;font-family:'DejaVu Sans Mono','Liberation Mono',monospace;transform:scaleX(0.9286);">30</span>
<span class="t" style="left:7.2px;top:256.52px;font-size:12px;line-height:16px;color:#606366;font-family:'DejaVu Sans Mono','Liberation Mono',monospace;transform:scaleX(0.9286);">31</span>
<span class="t" style="left:7.2px;top:276.2px;font-size:12px;line-height:16px;color:#606366;font-family:'DejaVu Sans Mono','Liberation Mono',monospace;transform:scaleX(0.9286);">32</span>
<span class="t" style="left:7.2px;top:295.88px;font-size:12px;line-height:16px;color:#606366;font-family:'DejaVu Sans Mono','Liberation Mono',monospace;transform:scaleX(0.9286);">33</span>
<span class="t" style="left:7.2px;top:315.56px;font-size:12px;line-height:16px;color:#606366;font-family:'DejaVu Sans Mono','Liberation Mono',monospace;transform:scaleX(0.9286);">34</span>
<span class="t" style="left:7.2px;top:335.24px;font-size:12px;line-height:16px;color:#606366;font-family:'DejaVu Sans Mono','Liberation Mono',monospace;transform:scaleX(0.9286);">35</span>
<span class="t" style="left:7.2px;top:354.92px;font-size:12px;line-height:16px;color:#606366;font-family:'DejaVu Sans Mono','Liberation Mono',monospace;transform:scaleX(0.9286);">36</span>
<span class="t" style="left:7.2px;top:374.6px;font-size:12px;line-height:16px;color:#606366;font-family:'DejaVu Sans Mono','Liberation Mono',monospace;transform:scaleX(0.9286);">37</span>
<span class="t" style="left:7.2px;top:394.28px;font-size:12px;line-height:16px;color:#606366;font-family:'DejaVu Sans Mono','Liberation Mono',monospace;transform:scaleX(0.9286);">38</span>
<span class="t" style="left:7.2px;top:413.96px;font-size:12px;line-height:16px;color:#606366;font-family:'DejaVu Sans Mono','Liberation Mono',monospace;transform:scaleX(0.9286);">39</span>
<span class="t" style="left:7.2px;top:433.64px;font-size:12px;line-height:16px;color:#606366;font-family:'DejaVu Sans Mono','Liberation Mono',monospace;transform:scaleX(0.9286);">40</span>
<span class="t" style="left:7.2px;top:453.32px;font-size:12px;line-height:16px;color:#606366;font-family:'DejaVu Sans Mono','Liberation Mono',monospace;transform:scaleX(0.9286);">41</span>
<span class="t" style="left:7.2px;top:473px;font-size:12px;line-height:16px;color:#606366;font-family:'DejaVu Sans Mono','Liberation Mono',monospace;transform:scaleX(0.9286);">42</span>
<span class="t" style="left:7.2px;top:492.68px;font-size:12px;line-height:16px;color:#606366;font-family:'DejaVu Sans Mono','Liberation Mono',monospace;transform:scaleX(0.9286);">43</span>
<span class="t" style="left:7.2px;top:512.36px;font-size:12px;line-height:16px;color:#606366;font-family:'DejaVu Sans Mono','Liberation Mono',monospace;transform:scaleX(0.9286);">44</span>
<span class="t" style="left:7.2px;top:532.04px;font-size:12px;line-height:16px;color:#606366;font-family:'DejaVu Sans Mono','Liberation Mono',monospace;transform:scaleX(0.9286);">45</span>
<span class="t" style="left:7.2px;top:551.72px;font-size:12px;line-height:16px;color:#606366;font-family:'DejaVu Sans Mono','Liberation Mono',monospace;transform:scaleX(0.9286);">46</span>
<span class="t" style="left:7.2px;top:571.4px;font-size:12px;line-height:16px;color:#606366;font-family:'DejaVu Sans Mono','Liberation Mono',monospace;transform:scaleX(0.9286);">47</span>
<div class="b" style="left:0.5px;top:0.5px;width:833px;height:24.5px;background:#3c3f41;border-bottom:1px solid #323436;box-sizing:border-box;"></div>
<span class="t" style="left:1px;top:6.39px;font-size:11px;line-height:16px;color:#629755;transform:scaleX(1.0161);">MainRepo.kt</span>
<svg class="i" style="left:66.5px;top:8px;" width="13" height="13" viewBox="0 0 16 16"><path d="M4.5 4.5l7 7M11.5 4.5l-7 7" stroke="#6c6f71" stroke-width="1.1"/></svg>
<span class="t" style="left:409px;top:6.39px;font-size:11px;line-height:16px;color:#629755;transform:scaleX(1.0291);">layout_post_item.xml</span>
<svg class="i" style="left:519.5px;top:8px;" width="13" height="13" viewBox="0 0 16 16"><path d="M4.5 4.5l7 7M11.5 4.5l-7 7" stroke="#6c6f71" stroke-width="1.1"/></svg>
<svg class="i" style="left:544.5px;top:7px;" width="15" height="15" viewBox="0 0 16 16"><circle cx="7.3" cy="7.3" r="6.9" fill="#47a2cf"/><path d="M9.8 5a3.5 3.5 0 1 0 0 4.6" fill="none" stroke="#245d80" stroke-width="1.8"/><path d="M9 9h7v7H9z" fill="#3c3f41"/><path d="M9.7 9.7h2.8L9.7 12.5z" fill="#3d86d6"/><path d="M12.9 9.7h2.9L9.7 15.8V12.9z" fill="#f5923a"/><path d="M9.9 15.8l3-3 3 3z" fill="#5fb0ea"/></svg>
<span class="t" style="left:562px;top:6.39px;font-size:11px;line-height:16px;color:#629755;transform:scaleX(1.0112);">PostListAdapter.kt</span>
<svg class="i" style="left:656.5px;top:8px;" width="13" height="13" viewBox="0 0 16 16"><path d="M4.5 4.5l7 7M11.5 4.5l-7 7" stroke="#6c6f71" stroke-width="1.1"/></svg>
<svg class="i" style="left:680.5px;top:6px;" width="15" height="15" viewBox="0 0 16 16"><path d="M6 .5h7v7.9H2.4V4.2z" fill="#aab4ba"/><path d="M5.4 .5v3.1H2.4z" fill="#d5dadd"/><path d="M5.4 .5v3.1H2.4v.6h3.7V.5z" fill="#3c3f41" opacity=".55"/><rect x=".3" y="8.8" width="15.4" height="6.9" fill="#e6752f"/><path d="M6.2 10.4l-2 1.85 2 1.85M9.8 10.4l2 1.85-2 1.85" fill="none" stroke="#a8410f" stroke-width="1.3"/></svg>
<span class="t" style="left:699px;top:6.39px;font-size:11px;line-height:16px;color:#d1675a;transform:scaleX(1.0476);">activity_main.xml</span>
<svg class="i" style="left:790.5px;top:8px;" width="13" height="13" viewBox="0 0 16 16"><path d="M4.5 4.5l7 7M11.5 4.5l-7 7" stroke="#6c6f71" stroke-width="1.1"/></svg>
<svg class="i" style="left:813px;top:7px;" width="14" height="14" viewBox="0 0 16 16"><path d="M3.5 6l4.5 4.5L12.5 6" fill="none" stroke="#c4c7c9" stroke-width="1.7"/></svg>
<svg class="i" style="left:28.5px;top:142.2px;" width="9" height="9" viewBox="0 0 16 16"><circle cx="8" cy="8" r="7" fill="#3e9ad0"/><circle cx="8" cy="8" r="2.8" fill="none" stroke="#1d3f57" stroke-width="1.8"/></svg>
<svg class="i" style="left:35.75px;top:140.75px;" width="6.5" height="11.5" viewBox="0 0 7 13"><path d="M3.5 1v12M.8 4l2.7-3 2.7 3" fill="none" stroke="#d9675a" stroke-width="1.3"/></svg>
<div class="b" style="left:54.7px;top:546px;width:1px;height:43px;background:#6e7173;"></div>
<svg class="i" style="left:50.7px;top:141.7px;" width="9" height="10" viewBox="0 0 9 10"><path d="M.7.7h7.6v5.3L4.5 9.3.7 6z" fill="#2b2b2b" stroke="#6e7173" stroke-width="1"/><path d="M2.5 4h4" stroke="#6e7173" stroke-width="1"/></svg>
<svg class="i" style="left:50.7px;top:397.54px;" width="9" height="10" viewBox="0 0 9 10"><path d="M.7.7h7.6v5.3L4.5 9.3.7 6z" fill="#2b2b2b" stroke="#6e7173" stroke-width="1"/><path d="M2.5 4h4" stroke="#6e7173" stroke-width="1"/></svg>
<svg class="i" style="left:50.7px;top:535.1px;" width="9" height="10" viewBox="0 0 9 10"><path d="M.7 9.3h7.6V4L4.5.7.7 4z" fill="#2b2b2b" stroke="#6e7173" stroke-width="1"/><path d="M2.5 6h4" stroke="#6e7173" stroke-width="1"/></svg>
<svg class="i" style="left:50.7px;top:554.78px;" width="9" height="10" viewBox="0 0 9 10"><path d="M.7 9.3h7.6V4L4.5.7.7 4z" fill="#2b2b2b" stroke="#6e7173" stroke-width="1"/><path d="M2.5 6h4" stroke="#6e7173" stroke-width="1"/></svg>
<svg class="i" style="left:50.7px;top:574.46px;" width="9" height="10" viewBox="0 0 9 10"><path d="M.7 9.3h7.6V4L4.5.7.7 4z" fill="#2b2b2b" stroke="#6e7173" stroke-width="1"/><path d="M2.5 6h4" stroke="#6e7173" stroke-width="1"/></svg>
<span class="t" style="left:59.5px;top:570.27px;font-size:12.37px;line-height:18px;color:#a9b7c6;font-family:'DejaVu Sans Mono','Liberation Mono',monospace;transform:scaleX(1.0636);">}</span>
<span class="t" style="left:472.8px;top:137.31px;font-size:12.37px;line-height:18px;color:#a9b7c6;font-family:'DejaVu Sans Mono','Liberation Mono',monospace;transform:scaleX(1.0636);">{</span>
<span class="t" style="left:482.75px;top:216.03px;font-size:12.37px;line-height:18px;color:#a9b7c6;font-family:'DejaVu Sans Mono','Liberation Mono',monospace;transform:scaleX(0.9993);"><span style="color:#cc7832">this</span>)[MainActivityViewModel::<span style="color:#cc7832">class</span>.<span style="color:#9876aa;font-style:italic">java</span>]</span>
<span class="t" style="left:465.65px;top:255.39px;font-size:12.37px;line-height:18px;color:#a9b7c6;font-family:'DejaVu Sans Mono','Liberation Mono',monospace;transform:scaleX(1.0016);">).setCancelable(<span style="color:#cc7832">false</span>).build()</span>
<span class="t" style="left:459.1px;top:334.11px;font-size:12.37px;line-height:18px;color:#a9b7c6;font-family:'DejaVu Sans Mono','Liberation Mono',monospace;transform:scaleX(1.0152);"><span style="color:#cc7832">is</span>)</span>
<span class="t" style="left:497.75px;top:393.15px;font-size:12.37px;line-height:18px;color:#a9b7c6;font-family:'DejaVu Sans Mono','Liberation Mono',monospace;transform:scaleX(1.0022);"><span style="color:#cc7832">this,</span> <b style="color:#d5dde5">{</b> postModels -&gt;</span>
<span class="t" style="left:467.2px;top:412.83px;font-size:12.37px;line-height:18px;color:#a9b7c6;font-family:'DejaVu Sans Mono','Liberation Mono',monospace;transform:scaleX(0.9996);"><span style="color:#6a8759">"</span> + postModels.<span style="text-decoration:underline wavy #8c8c5a 1px;text-underline-offset:2px">get</span>(<span style="color:#6897bb">0</span>).<span style="color:#9876aa">userId</span>)</span>
<span class="t" style="left:465px;top:452.19px;font-size:12.37px;line-height:18px;color:#a9b7c6;font-family:'DejaVu Sans Mono','Liberation Mono',monospace;transform:scaleX(0.9927);">tModels)</span>
<div class="b" style="left:445px;top:218px;width:34.5px;height:13.5px;background:#3b3b3b;border-radius:2px;"></div>
<span class="t" style="left:449px;top:216.84px;font-size:10px;line-height:16px;color:#787878;transform:scaleX(0.95);">owner:</span>
<div class="b" style="left:458px;top:394.5px;width:35.6px;height:13.4px;background:#3b3b3b;border-radius:2px;"></div>
<span class="t" style="left:461px;top:393.54px;font-size:10px;line-height:16px;color:#787878;transform:scaleX(0.9833);">owner:</span>
<svg class="i" style="left:740.5px;top:33px;" width="13" height="12" viewBox="0 0 13 12"><path d="M6.5.6l6 10.8H.5z" fill="#e2b93d"/><path d="M6.5 4v4" stroke="#2b2b2b" stroke-width="1.5"/><circle cx="6.5" cy="9.6" r=".9" fill="#2b2b2b"/></svg>
<span class="t" style="left:756px;top:31.22px;font-size:11.5px;line-height:16px;color:#c0c0c0;transform:scaleX(0.8333);">1</span>
<svg class="i" style="left:767.5px;top:33px;" width="13" height="12" viewBox="0 0 13 12"><path d="M6.5.6l6 10.8H.5z" fill="#4a8f3c"/><path d="M6.5 4v4" stroke="#2b2b2b" stroke-width="1.5"/><circle cx="6.5" cy="9.6" r=".9" fill="#2b2b2b"/></svg>
<span class="t" style="left:782.5px;top:31.22px;font-size:11.5px;line-height:16px;color:#c0c0c0;transform:scaleX(1);">6</span>
<svg class="i" style="left:796px;top:33px;" width="12" height="12" viewBox="0 0 16 16"><path d="M2.5 10.5L8 5l5.5 5.5" fill="none" stroke="#aeb4b8" stroke-width="1.8"/></svg>
<svg class="i" style="left:816px;top:33px;" width="12" height="12" viewBox="0 0 16 16"><path d="M2.5 5.5L8 11l5.5-5.5" fill="none" stroke="#aeb4b8" stroke-width="1.8"/></svg>
<div class="b" style="left:810px;top:49px;width:1px;height:540px;background:#4e5052;"></div>
<div class="b" style="left:820px;top:76px;width:13.5px;height:2px;background:#c9a52c;"></div>
<div class="b" style="left:820px;top:128.5px;width:13.5px;height:1.6px;background:#7a7866;"></div>
<div class="b" style="left:820px;top:153.3px;width:13.5px;height:1.6px;background:#7a7866;"></div>
<div class="b" style="left:820px;top:166.3px;width:13.5px;height:1.6px;background:#7a7866;"></div>
<div class="b" style="left:820px;top:178.8px;width:13.5px;height:1.6px;background:#7a7866;"></div>
<div class="b" style="left:820px;top:205px;width:13.5px;height:1.6px;background:#7a7866;"></div>
<div class="b" style="left:820px;top:409.5px;width:13.5px;height:1.6px;background:#7a7866;"></div>
<div class="b" style="left:825px;top:159.5px;width:8px;height:363.5px;background:rgba(166,166,166,.28);"></div>
</div>
<div class="p stripe-right" style="left:1260px;top:72px;width:20px;height:589px"><div class="b" style="left:0.5px;top:0.5px;width:19.5px;height:588.5px;background:#3c3f41;border-left:1px solid #353739;box-sizing:border-box;"></div>
<svg class="i" style="left:2.5px;top:8.5px;" width="15" height="15" viewBox="0 0 16 16"><path d="M14.8 2.6c-.9-.9-2.4-1-3.4-.2-.4.3-.4.9-.1 1.3.3.3.8.3 1.2.1.3-.3.8-.2 1.1.1.4.4.4 1 0 1.4-.9.9-2.5-.7-4.6-.7H6.4C3.6 4.6 1.4 6.7 1.4 9.3V13.5H4v-2.3h1.4v2.3H8v-2.3h1.4v2.3H12V9c0-.5.2-1 .6-1.3l1.9-1.5c1.2-.9 1.3-2.6.3-3.6z" fill="#aab3b8"/></svg>
<span class="v" style="left:16px;top:27px;color:#c0c0c0;transform:rotate(90deg) scaleX(0.9697);">Gradle</span>
<svg class="i" style="left:3px;top:78.5px;" width="13" height="13" viewBox="0 0 16 16"><path d="M9.5 1L2.5 8l2.2 2.2L13.9 1z" fill="#47c5fb"/><path d="M9.5 7.5L5.8 11.2l3.7 3.8h4.4l-3.7-3.8 3.7-3.7z" fill="#47c5fb"/><path d="M5.8 11.2l2.2 2.2 2.2-2.2L8 9z" fill="#00569e"/></svg>
<span class="v" style="left:16px;top:96px;color:#c0c0c0;transform:rotate(90deg) scaleX(1);">Flutter Outline</span>
<svg class="i" style="left:3px;top:187.5px;" width="13" height="13" viewBox="0 0 16 16"><path d="M9.5 1L2.5 8l2.2 2.2L13.9 1z" fill="#47c5fb"/><path d="M9.5 7.5L5.8 11.2l3.7 3.8h4.4l-3.7-3.8 3.7-3.7z" fill="#47c5fb"/><path d="M5.8 11.2l2.2 2.2 2.2-2.2L8 9z" fill="#00569e"/></svg>
<span class="v" style="left:16px;top:204.5px;color:#c0c0c0;transform:rotate(90deg) scaleX(0.9494);">Flutter Inspector</span>
<svg class="i" style="left:3px;top:306.1px;" width="13" height="13" viewBox="0 0 16 16"><path d="M9.5 1L2.5 8l2.2 2.2L13.9 1z" fill="#47c5fb"/><path d="M9.5 7.5L5.8 11.2l3.7 3.8h4.4l-3.7-3.8 3.7-3.7z" fill="#47c5fb"/><path d="M5.8 11.2l2.2 2.2 2.2-2.2L8 9z" fill="#00569e"/></svg>
<span class="v" style="left:16px;top:324px;color:#c0c0c0;transform:rotate(90deg) scaleX(0.9381);">Flutter Performance</span>
<svg class="i" style="left:3px;top:439.8px;" width="13" height="13" viewBox="0 0 16 16"><path d="M1.5 6.5a9 9 0 0 1 13 0M3.8 9a5.8 5.8 0 0 1 8.4 0M6 11.3a2.8 2.8 0 0 1 4 0" fill="none" stroke="#aeb4b8" stroke-width="1.5"/><circle cx="8" cy="13.5" r="1.1" fill="#aeb4b8"/></svg>
<span class="v" style="left:16px;top:456.7px;color:#c0c0c0;transform:rotate(90deg) scaleX(1.0059);">ADB Wi-Fi</span>
<svg class="i" style="left:3px;top:524.2px;" width="13" height="13" viewBox="0 0 16 16"><path d="M1.5 4.5h8v7h-8z" fill="none" stroke="#aeb4b8" stroke-width="1.4"/><path d="M10.5 1.5h4v6h-4z" fill="none" stroke="#aeb4b8" stroke-width="1.3"/><path d="M3 14h5" stroke="#aeb4b8" stroke-width="1.4"/></svg>
<span class="v" style="left:16px;top:540px;color:#c0c0c0;transform:rotate(90deg) scaleX(0.9545);">Emulator</span>
</div>
<div class="p toolwindow-bar" style="left:0px;top:661px;width:1280px;height:21px"><div class="b" style="left:0px;top:0px;width:1280px;height:21px;background:#3c3f41;border-top:1px solid #323436;box-sizing:border-box;"></div>
<svg class="i" style="left:30px;top:5.8px;" width="11" height="11" viewBox="0 0 16 16"><path d="M.5 3.2h3M5.5 3.2H15.5M.5 8h3M5.5 8H15.5M.5 12.8h3M5.5 12.8H15.5" stroke="#aeb4b8" stroke-width="2.7"/></svg>
<span class="t" style="left:45px;top:4.09px;font-size:11px;line-height:16px;color:#c0c0c0;transform:scaleX(0.9062);">TODO</span>
<svg class="i" style="left:94.5px;top:5.3px;" width="11" height="11" viewBox="0 0 16 16"><circle cx="8" cy="8" r="7.5" fill="#aeb4b8"/><path d="M8 3.5v5.5" stroke="#3c3f41" stroke-width="2.2"/><circle cx="8" cy="11.8" r="1.3" fill="#3c3f41"/></svg>
<span class="t" style="left:110px;top:4.09px;font-size:11px;line-height:16px;color:#c0c0c0;transform:scaleX(0.9153);"><u>6</u>: Problems</span>
<svg class="i" style="left:184.5px;top:4.8px;" width="12" height="12" viewBox="0 0 16 16"><path d="M3.5 1v14M3.5 9.5h5.5c2 0 3-1 3-3V4" fill="none" stroke="#aeb4b8" stroke-width="2.5"/><path d="M8.5 6L12 1.8 15.5 6z" fill="#aeb4b8"/></svg>
<span class="t" style="left:201px;top:4.09px;font-size:11px;line-height:16px;color:#c0c0c0;transform:scaleX(0.9615);"><u>9</u>: Git</span>
<svg class="i" style="left:245px;top:4.8px;" width="12" height="12" viewBox="0 0 16 16"><rect x="1" y="1.5" width="14" height="13" fill="#aeb4b8"/><path d="M3.5 5l3 3-3 3M8.5 11.5h4" fill="none" stroke="#3c3f41" stroke-width="1.7"/></svg>
<span class="t" style="left:260px;top:4.09px;font-size:11px;line-height:16px;color:#c0c0c0;transform:scaleX(1);">Terminal</span>
<svg class="i" style="left:319.25px;top:3.55px;" width="14.5" height="14.5" viewBox="0 0 16 16"><path d="M1.5 5.8l4-4.3 3.6.5 2.8 2.8-1.9 1.9-1.6-1.1-1 1 7.6 7.6-2.1 2.1-7.6-7.6L3.8 10.1z" fill="#aeb4b8"/></svg>
<span class="t" style="left:336.5px;top:4.09px;font-size:11px;line-height:16px;color:#c0c0c0;transform:scaleX(0.9792);">Build</span>
<svg class="i" style="left:379.5px;top:5.8px;" width="11" height="11" viewBox="0 0 16 16"><path d="M1 3h14M1 8h9M1 13h12" stroke="#aeb4b8" stroke-width="2.6"/></svg>
<span class="t" style="left:395.5px;top:4.09px;font-size:11px;line-height:16px;color:#c0c0c0;transform:scaleX(0.9545);">Logcat</span>
<svg class="i" style="left:444.25px;top:4.85px;" width="13.5" height="13.5" viewBox="0 0 16 16"><path d="M.8 13a7.2 7.2 0 0 1 14.4 0h-3.2a4 4 0 0 0-8 0z" fill="#aeb4b8"/><path d="M6.6 13l5.4-7.5-2.3 8z" fill="#aeb4b8" stroke="#3c3f41" stroke-width=".7"/></svg>
<span class="t" style="left:461px;top:4.09px;font-size:11px;line-height:16px;color:#c0c0c0;transform:scaleX(1);">Profiler</span>
<svg class="i" style="left:517px;top:4.3px;" width="12" height="13" viewBox="0 0 16 16"><ellipse cx="8" cy="3.5" rx="6.5" ry="2.7" fill="#aeb4b8"/><path d="M1.5 5.8c0 3.5 13 3.5 13 0v2.4c0 3.5-13 3.5-13 0zM1.5 10c0 3.5 13 3.5 13 0v2.4c0 3.5-13 3.5-13 0z" fill="#aeb4b8"/></svg>
<span class="t" style="left:533px;top:4.09px;font-size:11px;line-height:16px;color:#c0c0c0;transform:scaleX(0.9789);">Database Inspector</span>
<svg class="i" style="left:648px;top:5.3px;" width="10" height="11" viewBox="0 0 10 11"><path d="M1 1l8.5 4.5L1 10z" fill="#aeb4b8"/></svg>
<div class="b" style="left:655.8px;top:12.8px;width:4.6px;height:4.6px;background:#2fb344;border-radius:50%;border:1px solid #3c3f41;"></div>
<span class="t" style="left:663px;top:4.09px;font-size:11px;line-height:16px;color:#c0c0c0;transform:scaleX(0.9688);"><u>4</u>: Run</span>
<div class="b" style="left:1068.8px;top:5.8px;width:12.4px;height:12.4px;background:#4fa55a;border-radius:50%;"></div>
<span class="t" style="left:1072.3px;top:4.51px;font-size:9.5px;line-height:16px;color:#fff;transform:scaleX(1.08);">2</span>
<span class="t" style="left:1085px;top:4.09px;font-size:11px;line-height:16px;color:#c0c0c0;transform:scaleX(0.92);">Event Log</span>
<svg class="i" style="left:1152.5px;top:3.8px;" width="13" height="13" viewBox="0 0 16 16"><path d="M1 9.5V1.5h9.5v2M3.5 12V4h9.5v2.5" fill="none" stroke="#aeb4b8" stroke-width="1.4"/><circle cx="9.5" cy="9.5" r="2.8" fill="none" stroke="#aeb4b8" stroke-width="1.5"/><path d="M11.5 11.5l3 3" stroke="#aeb4b8" stroke-width="1.7"/></svg>
<span class="t" style="left:1170px;top:4.09px;font-size:11px;line-height:16px;color:#c0c0c0;transform:scaleX(0.9753);">Layout Inspector</span>
</div>
<svg class="i" style="left:612px;top:640px" width="120" height="32" viewBox="0 0 120 32"><path d="M2.5 0v19.8a2.5 2.5 0 0 0 2.5 2.5H52.5l6.7 8.4 6.7-8.4H114a2.5 2.5 0 0 0 2.5-2.5V0z" fill="#394637" stroke="#6c7f64" stroke-width="1"/></svg>
<div class="p statusbar" style="left:0px;top:682px;width:1280px;height:19px"><div class="b" style="left:0px;top:0px;width:1280px;height:18.7px;background:#3c3f41;border-top:1px solid #393c3e;box-sizing:border-box;"></div>
<svg class="i" style="left:4.5px;top:3px;" width="13" height="13" viewBox="0 0 16 16"><path d="M4.5 2.5h10v9.5h-10z" fill="none" stroke="#aeb4b8" stroke-width="1.4"/><path d="M1.5 5v9.5h10" fill="none" stroke="#aeb4b8" stroke-width="1.4"/></svg>
<span class="t" style="left:25px;top:1.59px;font-size:11px;line-height:16px;color:#c0c0c0;transform:scaleX(1.0118);">Launch succeeded (moments ago)</span>
<span class="t" style="left:996px;top:1.59px;font-size:11px;line-height:16px;color:#c0c0c0;transform:scaleX(0.8929);">23:36</span>
<span class="t" style="left:1033px;top:1.59px;font-size:11px;line-height:16px;color:#c0c0c0;transform:scaleX(0.8276);">CRLF</span>
<span class="t" style="left:1069px;top:1.59px;font-size:11px;line-height:16px;color:#c0c0c0;transform:scaleX(0.9355);">UTF-8</span>
<span class="t" style="left:1109px;top:1.59px;font-size:11px;line-height:16px;color:#c0c0c0;transform:scaleX(0.9318);">4 spaces</span>
<svg class="i" style="left:1160.5px;top:2.5px;" width="11" height="14" viewBox="0 0 12 16"><path d="M3 2v12M3 10c5 0 6.5-2 6.5-7" fill="none" stroke="#aeb4b8" stroke-width="1.8"/><circle cx="3" cy="2.5" r="1.8" fill="#aeb4b8"/><circle cx="9.5" cy="2.5" r="1.8" fill="#aeb4b8"/><circle cx="3" cy="13" r="1.8" fill="#aeb4b8"/></svg>
<span class="t" style="left:1178px;top:1.59px;font-size:11px;line-height:16px;color:#c0c0c0;transform:scaleX(1.0417);">main</span>
<svg class="i" style="left:1211.5px;top:3.2px;" width="12" height="12" viewBox="0 0 16 16"><rect x="5" y="8" width="9.5" height="6.5" fill="#aeb4b8"/><path d="M2.5 8V5a2.6 2.6 0 0 1 5.2 0v3" fill="none" stroke="#aeb4b8" stroke-width="1.7"/></svg>
<svg class="i" style="left:1234.5px;top:2.5px;" width="14" height="14" viewBox="0 0 16 16"><circle cx="8" cy="8" r="7.5" fill="#aeb4b8"/><circle cx="5.5" cy="6" r="1.1" fill="#3c3f41"/><circle cx="10.5" cy="6" r="1.1" fill="#3c3f41"/><path d="M4.3 9.5a3.9 3.9 0 0 0 7.4 0z" fill="#3c3f41"/></svg>
<svg class="i" style="left:1257px;top:2.5px;" width="14" height="14" viewBox="0 0 16 16"><circle cx="8" cy="8" r="7.5" fill="#aeb4b8"/><circle cx="5.5" cy="6" r="1.1" fill="#3c3f41"/><circle cx="10.5" cy="6" r="1.1" fill="#3c3f41"/><path d="M4.5 12a3.7 3.7 0 0 1 7 0" fill="none" stroke="#3c3f41" stroke-width="1.3"/></svg>
</div>
<div class="p emulator" style="left:509px;top:50px;width:325px;height:604px"><div class="b" style="left:0px;top:0px;width:325px;height:603.7px;background:#fafafa;border:1px solid #141414;border-bottom:none;box-sizing:border-box;"></div>
<div class="b" style="left:1px;top:1px;width:323px;height:28px;background:#fff;"></div>
<span class="t" style="left:8.5px;top:6.59px;font-size:11px;line-height:16px;color:#1c1c1c;transform:scaleX(0.9698);">Android Emulator - Nexus_5X_API_29:5554</span>
<div class="b" style="left:1px;top:29px;width:323px;height:18.5px;background:#3700b3;"></div>
<span class="t" style="left:6.8px;top:30.92px;font-size:11.5px;line-height:16px;color:#efe6ff;transform:scaleX(0.9964);-webkit-text-stroke:.45px;">11:42</span>
<svg class="i" style="left:42.5px;top:32px;" width="12" height="12" viewBox="0 0 16 16"><circle cx="8" cy="8" r="6.3" fill="none" stroke="#efe6ff" stroke-width="1.7"/><circle cx="8" cy="8" r="3" fill="none" stroke="#efe6ff" stroke-width="1.4"/><path d="M3.5 3.5l9 9" stroke="#efe6ff" stroke-width="1.6"/></svg>
<svg class="i" style="left:59.7px;top:34px;" width="12" height="8" viewBox="0 0 12 8"><path d="M3 8a3 3 0 0 1-.3-6A4 4 0 0 1 10 2.8 2.7 2.7 0 0 1 9.8 8z" fill="#f4eeff"/></svg>
<svg class="i" style="left:283.1px;top:32.85px;" width="12" height="9.7" viewBox="0 0 13 10"><path d="M6.5 10L0 2.5a9.5 9.5 0 0 1 13 0z" fill="#f4eeff"/></svg>
<svg class="i" style="left:296px;top:33px;" width="10" height="9.8" viewBox="0 0 10 10"><path d="M10 0v10H0z" fill="#f4eeff"/><path d="M8.3 4v4.3H4z" fill="#7a55d6"/></svg>
<svg class="i" style="left:311.2px;top:32.55px;" width="6.8" height="10.5" viewBox="0 0 7 11"><path d="M2 0h3v1h2v10H0V1h2z" fill="#f4eeff"/></svg>
<div class="b" style="left:6px;top:54.2px;width:312px;height:94.5px;background:#fff;border-radius:3px;box-shadow:0 1.5px 3.5px rgba(0,0,0,.16),0 0 2.5px rgba(0,0,0,.08);"></div>
<span class="t" style="left:13.3px;top:62.15px;font-size:14px;line-height:16px;color:#1d1d1d;font-weight:bold;transform:scaleX(0.9464);-webkit-text-stroke:0;">sunt aut facere repellat provident occaecati</span>
<span class="t" style="left:13.3px;top:78.35px;font-size:14px;line-height:16px;color:#1d1d1d;font-weight:bold;transform:scaleX(0.9402);-webkit-text-stroke:0;">excepturi optio reprehenderit</span>
<span class="t" style="left:13.3px;top:96.3px;font-size:13px;line-height:16px;color:#8a8a8a;transform:scaleX(0.9733);-webkit-text-stroke:0;">quia et suscipit</span>
<span class="t" style="left:13.3px;top:111.6px;font-size:13px;line-height:16px;color:#8a8a8a;transform:scaleX(0.9419);-webkit-text-stroke:0;">sus...</span>
<span class="t" style="left:13.5px;top:128.03px;font-size:10px;line-height:16px;color:#a0a0a0;-webkit-text-stroke:0;transform:scaleX(.85);">1</span>
<div class="b" style="left:6px;top:161.4px;width:312px;height:63px;background:#fff;border-radius:3px;box-shadow:0 1.5px 3.5px rgba(0,0,0,.16),0 0 2.5px rgba(0,0,0,.08);"></div>
<span class="t" style="left:13.3px;top:169.35px;font-size:14px;line-height:16px;color:#1d1d1d;font-weight:bold;transform:scaleX(0.9363);-webkit-text-stroke:0;">qui est esse</span>
<span class="t" style="left:13.3px;top:187.3px;font-size:13px;line-height:16px;color:#8a8a8a;transform:scaleX(0.9554);-webkit-text-stroke:0;">est rerum tempore vi...</span>
<span class="t" style="left:13.5px;top:203.74px;font-size:10px;line-height:16px;color:#a0a0a0;-webkit-text-stroke:0;transform:scaleX(.85);">1</span>
<div class="b" style="left:6px;top:238px;width:312px;height:79.1px;background:#fff;border-radius:3px;box-shadow:0 1.5px 3.5px rgba(0,0,0,.16),0 0 2.5px rgba(0,0,0,.08);"></div>
<span class="t" style="left:13.3px;top:245.95px;font-size:14px;line-height:16px;color:#1d1d1d;font-weight:bold;transform:scaleX(0.9467);-webkit-text-stroke:0;">ea molestias quasi exercitationem repellat qui</span>
<span class="t" style="left:13.3px;top:262.15px;font-size:14px;line-height:16px;color:#1d1d1d;font-weight:bold;transform:scaleX(0.9342);-webkit-text-stroke:0;">ipsa sit aut</span>
<span class="t" style="left:13.3px;top:280.1px;font-size:13px;line-height:16px;color:#8a8a8a;transform:scaleX(0.9517);-webkit-text-stroke:0;">et iusto sed quo iur...</span>
<span class="t" style="left:13.5px;top:296.54px;font-size:10px;line-height:16px;color:#a0a0a0;-webkit-text-stroke:0;transform:scaleX(.85);">1</span>
<div class="b" style="left:6px;top:330.6px;width:312px;height:62.7px;background:#fff;border-radius:3px;box-shadow:0 1.5px 3.5px rgba(0,0,0,.16),0 0 2.5px rgba(0,0,0,.08);"></div>
<span class="t" style="left:13.3px;top:338.55px;font-size:14px;line-height:16px;color:#1d1d1d;font-weight:bold;transform:scaleX(0.9555);-webkit-text-stroke:0;">eum et est occaecati</span>
<span class="t" style="left:13.3px;top:356.5px;font-size:13px;line-height:16px;color:#8a8a8a;transform:scaleX(0.9488);-webkit-text-stroke:0;">ullam et saepe reici...</span>
<span class="t" style="left:13.5px;top:372.94px;font-size:10px;line-height:16px;color:#a0a0a0;-webkit-text-stroke:0;transform:scaleX(.85);">1</span>
<div class="b" style="left:6px;top:406.8px;width:312px;height:62.7px;background:#fff;border-radius:3px;box-shadow:0 1.5px 3.5px rgba(0,0,0,.16),0 0 2.5px rgba(0,0,0,.08);"></div>
<span class="t" style="left:13.3px;top:414.75px;font-size:14px;line-height:16px;color:#1d1d1d;font-weight:bold;transform:scaleX(0.9273);-webkit-text-stroke:0;">nesciunt quas odio</span>
<span class="t" style="left:13.3px;top:432.7px;font-size:13px;line-height:16px;color:#8a8a8a;transform:scaleX(0.9496);-webkit-text-stroke:0;">repudiandae veniam q...</span>
<span class="t" style="left:13.5px;top:449.14px;font-size:10px;line-height:16px;color:#a0a0a0;-webkit-text-stroke:0;transform:scaleX(.85);">1</span>
<div class="b" style="left:6px;top:483px;width:312px;height:62.8px;background:#fff;border-radius:3px;box-shadow:0 1.5px 3.5px rgba(0,0,0,.16),0 0 2.5px rgba(0,0,0,.08);"></div>
<span class="t" style="left:13.3px;top:490.95px;font-size:14px;line-height:16px;color:#1d1d1d;font-weight:bold;transform:scaleX(0.947);-webkit-text-stroke:0;">dolorem eum magni eos aperiam quia</span>
<span class="t" style="left:13.3px;top:508.9px;font-size:13px;line-height:16px;color:#8a8a8a;transform:scaleX(0.9622);-webkit-text-stroke:0;">ut aspernatur corpor...</span>
<span class="t" style="left:13.5px;top:525.33px;font-size:10px;line-height:16px;color:#a0a0a0;-webkit-text-stroke:0;transform:scaleX(.85);">1</span>
<div class="b" style="left:6px;top:559.2px;width:312px;height:30.8px;background:#fff;border-radius:3px;box-shadow:0 1.5px 3.5px rgba(0,0,0,.16),0 0 2.5px rgba(0,0,0,.08);"></div>
<div class="b" style="left:1px;top:565.5px;width:323px;height:38.2px;background:#000;"></div>
<svg class="i" style="left:61.3px;top:576.8px;" width="14" height="12" viewBox="0 0 14 12"><path d="M0 0h14L7 12z" fill="#fff"/></svg>
<div class="b" style="left:156px;top:578.3px;width:12.2px;height:12.2px;background:#fff;border-radius:50%;"></div>
<div class="b" style="left:249px;top:578px;width:12.5px;height:12.2px;background:#fff;border-radius:1px;"></div>
<svg class="i" style="left:295.5px;top:579px;" width="13" height="9" viewBox="0 0 13 9"><path d="M0 0h2v2H0zM2.75 0h2v2h-2zM5.5 0h2v2h-2zM8.25 0h2v2h-2zM11 0h2v2h-2zM0 2.75h2v2H0zM2.75 2.75h2v2h-2zM5.5 2.75h2v2h-2zM8.25 2.75h2v2h-2zM11 2.75h2v2h-2zM3 6.5h7v1.8H3z" fill="#b8b8b8"/></svg>
</div>
<div class="p emulator-toolbar" style="left:834px;top:79px;width:62px;height:483px"><div class="b" style="left:0px;top:0.4px;width:61.3px;height:482.6px;background:#efefef;border:1px solid #101010;box-sizing:border-box;"></div>
<div class="b" style="left:14px;top:13.4px;width:7px;height:1px;background:#8c8c8c;"></div>
<svg class="i" style="left:39.25px;top:10.25px;" width="7.5" height="7.5" viewBox="0 0 10 10"><path d="M1 1l8 8M9 1L1 9" stroke="#505050" stroke-width="1.25"/></svg>
<svg class="i" style="left:20.3px;top:34.8px;" width="20" height="20" viewBox="0 0 16 16"><path d="M8 1.5v6.5" stroke="#5f7d8c" stroke-width="1.9" stroke-linecap="round"/><path d="M4.6 3.9a5.7 5.7 0 1 0 6.8 0" fill="none" stroke="#5f7d8c" stroke-width="1.9" stroke-linecap="round"/></svg>
<svg class="i" style="left:20.3px;top:76.5px;" width="20" height="20" viewBox="0 0 16 16"><path d="M1.5 5.8h3L8.5 2v12L4.5 10.2h-3z" fill="#5f7d8c"/><path d="M10 5.2a3.4 3.4 0 0 1 0 5.6z" fill="#5f7d8c"/><path d="M10.3 1.8a6.5 6.5 0 0 1 0 12.4" fill="none" stroke="#5f7d8c" stroke-width="1.6"/></svg>
<svg class="i" style="left:20.3px;top:117.6px;" width="20" height="20" viewBox="0 0 16 16"><path d="M3 5.8h3L10 2v12L6 10.2H3z" fill="#5f7d8c"/><path d="M11.5 5.2a3.4 3.4 0 0 1 0 5.6z" fill="#5f7d8c"/></svg>
<svg class="i" style="left:19.3px;top:157.2px;" width="22" height="22" viewBox="0 0 16 16"><rect x="4.7" y="2.7" width="6.6" height="10.6" rx=".8" fill="none" stroke="#5f7d8c" stroke-width="1.6" transform="rotate(-45 8 8)"/><path d="M9.5 .9a7 7 0 0 1 5.6 5.6" fill="none" stroke="#5f7d8c" stroke-width="1.4"/></svg>
<svg class="i" style="left:19.3px;top:198px;" width="22" height="22" viewBox="0 0 16 16"><rect x="4.7" y="2.7" width="6.6" height="10.6" rx=".8" fill="none" stroke="#5f7d8c" stroke-width="1.6" transform="rotate(45 8 8)"/><path d="M6.5 .9a7 7 0 0 0-5.6 5.6" fill="none" stroke="#5f7d8c" stroke-width="1.4"/></svg>
<svg class="i" style="left:20.3px;top:240.6px;" width="20" height="20" viewBox="0 0 16 16"><path d="M1 4h3.2l1.3-1.8h5L11.8 4H15v10H1z" fill="#5f7d8c"/><circle cx="8" cy="8.8" r="2.9" fill="none" stroke="#efefef" stroke-width="1.5"/></svg>
<svg class="i" style="left:20.3px;top:281.8px;" width="20" height="20" viewBox="0 0 16 16"><circle cx="6.5" cy="6.5" r="4.6" fill="none" stroke="#5f7d8c" stroke-width="1.6"/><path d="M10 10l4.6 4.6" stroke="#5f7d8c" stroke-width="2"/><path d="M4.3 6.5h4.4M6.5 4.3v4.4" stroke="#5f7d8c" stroke-width="1.3"/></svg>
<svg class="i" style="left:20.3px;top:323.7px;" width="20" height="20" viewBox="0 0 16 16"><path d="M11.8 2.5v11L3.5 8z" fill="none" stroke="#5f7d8c" stroke-width="1.6" stroke-linejoin="round"/></svg>
<svg class="i" style="left:20.3px;top:364.8px;" width="20" height="20" viewBox="0 0 16 16"><circle cx="8" cy="8" r="5.7" fill="none" stroke="#5f7d8c" stroke-width="1.6"/></svg>
<svg class="i" style="left:20.3px;top:405.7px;" width="20" height="20" viewBox="0 0 16 16"><rect x="2.8" y="2.8" width="10.4" height="10.4" rx=".6" fill="none" stroke="#5f7d8c" stroke-width="1.6"/></svg>
<svg class="i" style="left:20.3px;top:447.2px;" width="20" height="20" viewBox="0 0 16 16"><circle cx="3" cy="8" r="1.5" fill="#5f7d8c"/><circle cx="8" cy="8" r="1.5" fill="#5f7d8c"/><circle cx="13" cy="8" r="1.5" fill="#5f7d8c"/></svg>
</div>
</body></html>
